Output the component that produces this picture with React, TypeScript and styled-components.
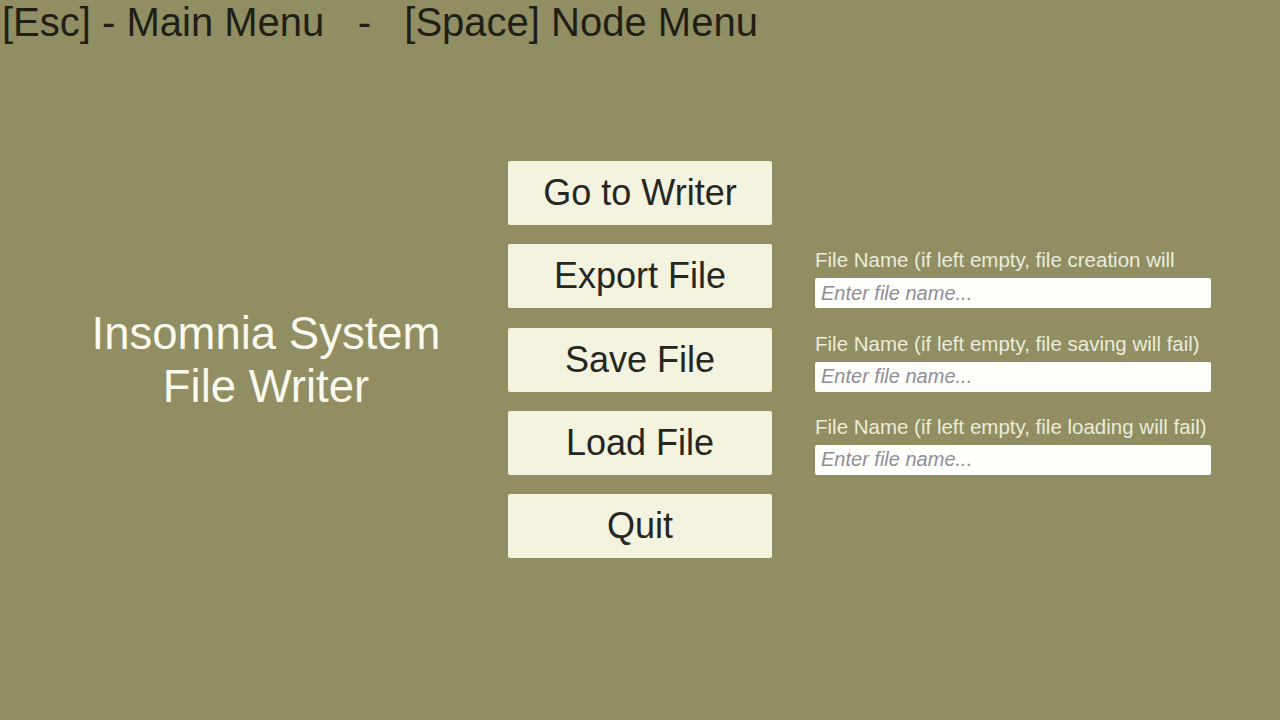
import React from "react";
import styled, { createGlobalStyle } from "styled-components";

const Global = createGlobalStyle`
  html, body { margin: 0; padding: 0; }
  body {
    background: #908e62;
    font-family: "Liberation Sans", Arial, sans-serif;
    overflow: hidden;
  }
`;

const Screen = styled.div`
  width: 1280px;
  height: 720px;
  background: #908e62;
  display: flex;
  flex-direction: column;
`;

const Hint = styled.div`
  height: 46px;
  padding-left: 2px;
  font-size: 40px;
  line-height: normal;
  color: #1f1f16;
  white-space: pre;
`;

const Layout = styled.div`
  margin-top: 115px;
  display: grid;
  grid-template-columns: 508px 264px 43px 396px;
  grid-template-rows: repeat(5, 64px);
  row-gap: 19.25px;
`;

const Title = styled.h1`
  grid-column: 1;
  grid-row: 1 / span 5;
  align-self: center;
  margin: 0;
  padding-left: 24px;
  text-align: center;
  font-weight: normal;
  font-size: 45.5px;
  line-height: 53px;
  color: #faf9ee;
`;

const MenuButton = styled.button<{ $row: number }>`
  grid-column: 2;
  grid-row: ${(p) => p.$row};
  display: flex;
  align-items: center;
  justify-content: center;
  border: none;
  border-radius: 2px;
  background: #f4f3df;
  color: #262622;
  font-family: "Liberation Sans", Arial, sans-serif;
  font-size: 36px;
  padding: 0;
  cursor: pointer;
`;

const Field = styled.div<{ $row: number }>`
  grid-column: 4;
  grid-row: ${(p) => p.$row};
  align-self: end;
  display: flex;
  flex-direction: column;
  gap: 6px;
`;

const FieldLabel = styled.label`
  height: 24px;
  line-height: 24px;
  overflow: hidden;
  font-size: 20.5px;
  color: #ecebdc;
`;

const NameInput = styled.input`
  box-sizing: border-box;
  width: 396px;
  height: 30px;
  border: none;
  border-radius: 2px;
  background: #fefefa;
  padding: 0 6px;
  font-family: "Liberation Sans", Arial, sans-serif;
  font-size: 20px;
  font-style: italic;
  color: #333;
  outline: none;
  &::placeholder {
    color: #8e8e98;
    font-style: italic;
  }
`;

const buttons = ["Go to Writer", "Export File", "Save File", "Load File", "Quit"];

const fields = [
  { row: 2, label: "File Name (if left empty, file creation will fail)" },
  { row: 3, label: "File Name (if left empty, file saving will fail)" },
  { row: 4, label: "File Name (if left empty, file loading will fail)" },
];

export default function App() {
  return (
    <>
      <Global />
      <Screen>
        <Hint>{"[Esc] - Main Menu   -   [Space] Node Menu"}</Hint>
        <Layout>
          <Title>
            Insomnia System
            <br />
            File Writer
          </Title>
          {buttons.map((b, i) => (
            <MenuButton key={b} $row={i + 1}>
              {b}
            </MenuButton>
          ))}
          {fields.map((f) => (
            <Field key={f.row} $row={f.row}>
              <FieldLabel>{f.label}</FieldLabel>
              <NameInput placeholder="Enter file name..." />
            </Field>
          ))}
        </Layout>
      </Screen>
    </>
  );
}
